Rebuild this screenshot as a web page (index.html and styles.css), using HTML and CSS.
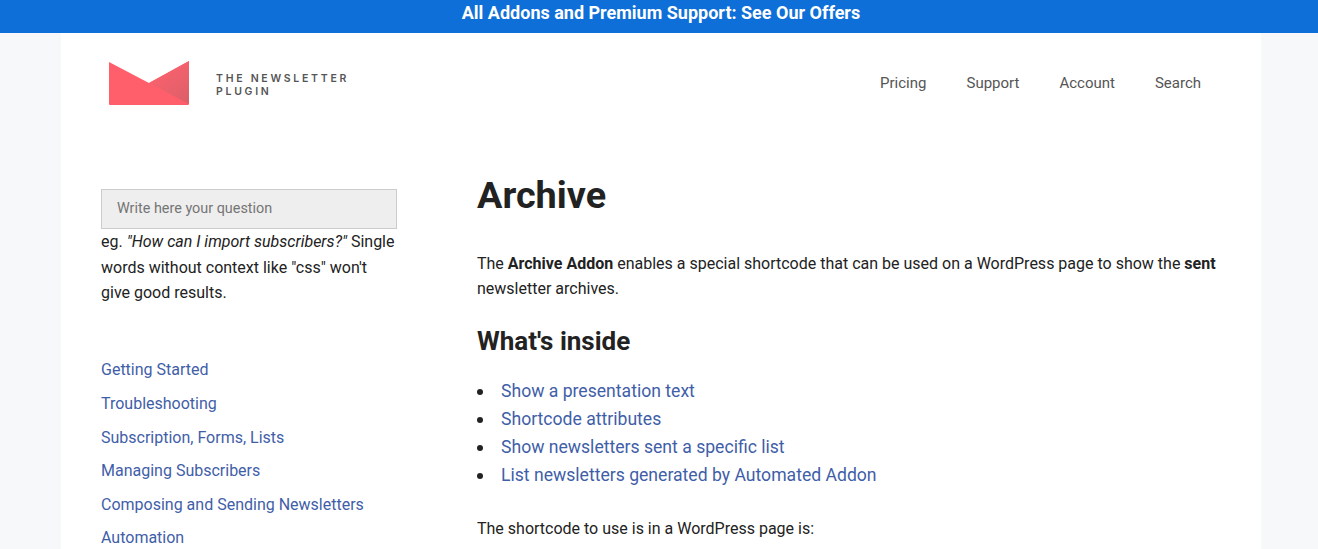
FILE: index.html
```html
<!DOCTYPE html>
<html lang="en">
<head>
  <meta charset="UTF-8" />
  <meta name="viewport" content="width=device-width, initial-scale=1" />
  <title>Archive - The Newsletter Plugin</title>
  <link rel="stylesheet" href="styles.css">
</head>
<body>
  <div class="promo"><a href="#">All Addons and Premium Support: See Our Offers</a></div>

  <div class="page">
    <header class="site-header">
      <a href="#" class="logo">
        <svg class="logo-mark" width="81" height="44" viewBox="0 0 81 44">
          <defs>
            <linearGradient id="fold" x1="0.2" y1="0" x2="0.9" y2="1">
              <stop offset="0" stop-color="#ff626e" />
              <stop offset="1" stop-color="#dc5f69" />
            </linearGradient>
          </defs>
          <path d="M0 1 L40 22 L80 0 L80 43 Q80 44 79 44 L1 44 Q0 44 0 43 Z" fill="#ff5f6b" />
          <path d="M40 22 L80 0 L80 43 Z" fill="url(#fold)" />
        </svg>
        <span class="logo-text">THE NEWSLETTER<br>PLUGIN</span>
      </a>
      <nav class="main-nav">
        <a href="#">Pricing</a>
        <a href="#">Support</a>
        <a href="#">Account</a>
        <a href="#">Search</a>
      </nav>
    </header>

    <div class="columns">
      <aside class="sidebar">
        <input class="search" type="text" placeholder="Write here your question">
        <p class="hint">eg. <em>"How can I import subscribers?"</em> Single words without context like "css" won't give good results.</p>
        <ul class="side-menu">
          <li><a href="#">Getting Started</a></li>
          <li><a href="#">Troubleshooting</a></li>
          <li><a href="#">Subscription, Forms, Lists</a></li>
          <li><a href="#">Managing Subscribers</a></li>
          <li><a href="#">Composing and Sending Newsletters</a></li>
          <li><a href="#">Automation</a></li>
        </ul>
      </aside>

      <main class="content">
        <h1>Archive</h1>
        <p>The <strong>Archive Addon</strong> enables a special shortcode that can be used on a WordPress page to show the <strong>sent</strong> newsletter archives.</p>
        <h2>What's inside</h2>
        <ul class="toc">
          <li><a href="#">Show a presentation text</a></li>
          <li><a href="#">Shortcode attributes</a></li>
          <li><a href="#">Show newsletters sent a specific list</a></li>
          <li><a href="#">List newsletters generated by Automated Addon</a></li>
        </ul>
        <p>The shortcode to use is in a WordPress page is:</p>
      </main>
    </div>
  </div>
</body>
</html>
```

FILE: styles.css
```css
* {
  margin: 0;
  padding: 0;
  box-sizing: border-box;
}
html {
  height: 100%;
  overflow: hidden;
}
body {
  width: 1322px;
  height: 100%;
  font-family: Roboto, sans-serif;
  font-size: 16px;
  line-height: 25.6px;
  background-color: #f7f8fa;
  color: #222;
}
a {
  color: #3f5ea8;
  text-decoration: none;
}
.promo {
  height: 33px;
  background-color: #0f6fd8;
  text-align: center;
  font-size: 18px;
  font-weight: 700;
  line-height: 26px;
}
.promo a {
  color: #fff;
}
.page {
  width: 1200px;
  margin: 0 auto;
  background-color: #fff;
  padding: 0 40px;
}
.site-header {
  height: 100px;
  display: flex;
  justify-content: space-between;
  align-items: center;
}
.logo {
  display: flex;
  align-items: center;
  margin-left: 8px;
  margin-top: -1px;
}
.logo-text {
  margin-left: 26px;
  margin-top: 4px;
  font-family: Inter, sans-serif;
  font-size: 10.5px;
  font-weight: 600;
  line-height: 13px;
  letter-spacing: 2.72px;
  color: #555;
}
.main-nav {
  display: flex;
  gap: 40px;
  margin-right: 20px;
  margin-top: 1px;
}
.main-nav a {
  color: #555;
  font-size: 15px;
}
.columns {
  display: flex;
  padding-top: 56px;
}
.sidebar {
  width: 296px;
  margin-right: 80px;
  flex-shrink: 0;
}
.search {
  display: block;
  width: 100%;
  height: 40px;
  padding: 0 15px 2px;
  background-color: #eee;
  border: 1px solid #ccc;
  font-family: Roboto, sans-serif;
  font-size: 14.4px;
}
.search::placeholder {
  color: #757575;
}
.hint {
  margin-bottom: 51.6px;
}
.side-menu {
  list-style: none;
}
.side-menu li {
  margin-bottom: 8px;
}
.content {
  flex: 1;
  margin-top: -17px;
}
h1 {
  font-size: 37.8px;
  font-weight: 700;
  line-height: 46px;
  margin-bottom: 32.6px;
}
.content p {
  margin-bottom: 23.4px;
}
h2 {
  font-size: 26px;
  font-weight: 700;
  line-height: 32px;
  margin-bottom: 20px;
}
.toc {
  list-style: none;
  font-size: 17.6px;
  line-height: 28px;
  padding-left: 24px;
  margin-bottom: 27px;
}
.toc li::before {
  content: "";
  display: inline-block;
  width: 6px;
  height: 6px;
  margin-left: -24px;
  margin-right: 18px;
  vertical-align: 2px;
  border-radius: 50%;
  background-color: #222;
}
```
